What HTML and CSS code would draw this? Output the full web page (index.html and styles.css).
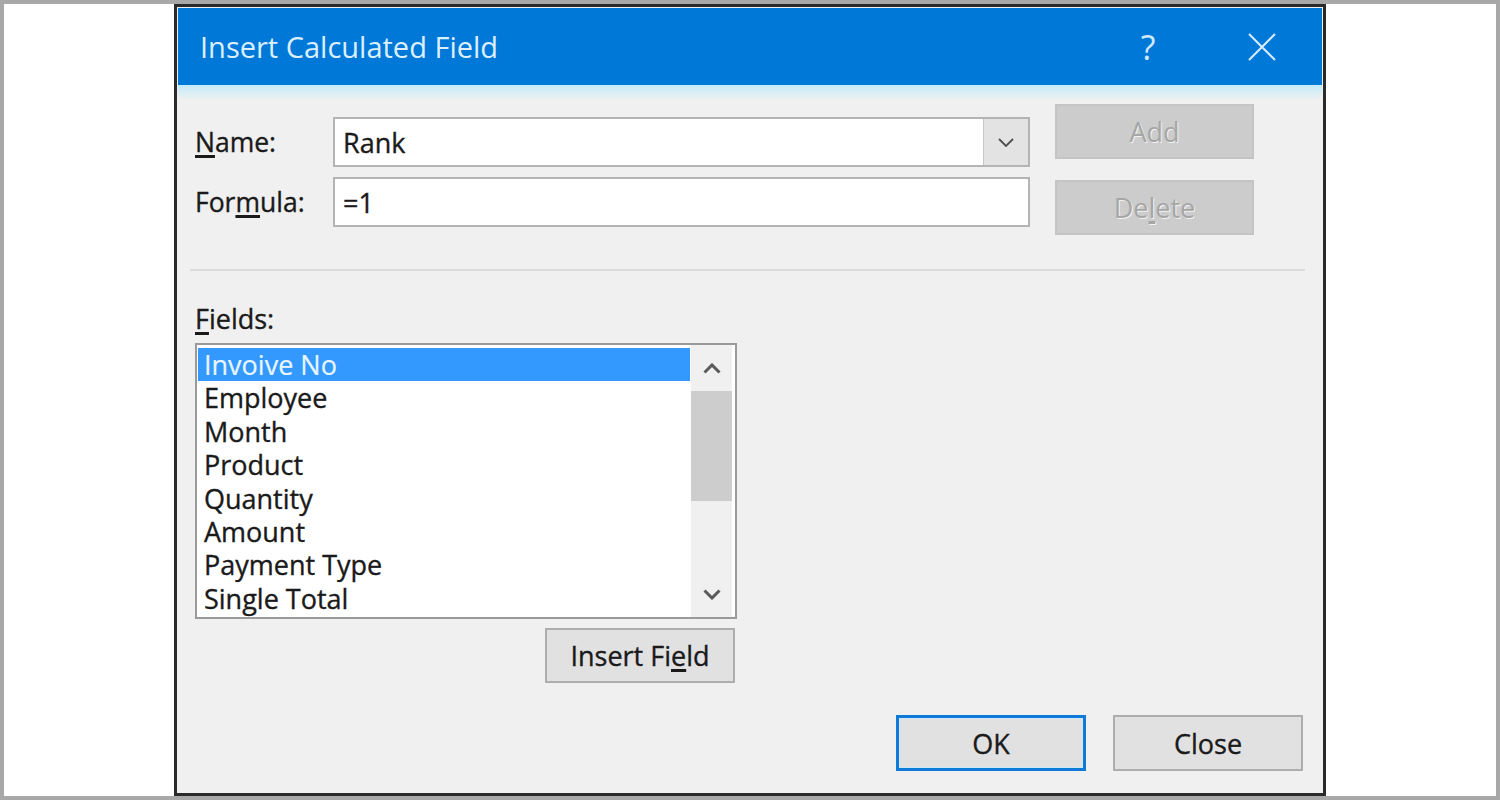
FILE: index.html
```html
<!DOCTYPE html>
<html>
<head>
<meta charset="utf-8">
<title>Insert Calculated Field</title>
<link rel="stylesheet" href="styles.css">
</head>
<body>
<div class="frame">
  <div class="dialog">
    <div class="titlebar">
      <div class="title">Insert Calculated Field</div>
      <div class="tb-btn help">?</div>
      <div class="tb-btn close">
        <svg width="28" height="28" viewBox="0 0 28 28"><path d="M1 1 L27 27 M27 1 L1 27" stroke="#d6ecff" stroke-width="2" fill="none"/></svg>
      </div>
    </div>
    <div class="body">
      <div class="top">
        <div class="form">
          <label class="lbl"><u>N</u>ame:</label>
          <div class="combo">
            <span class="val">Rank</span>
            <span class="drop"><svg width="16" height="9" viewBox="0 0 16 9"><polyline points="1,1 8,8 15,1" stroke="#505050" stroke-width="1.8" fill="none"/></svg></span>
          </div>
          <label class="lbl">For<u>m</u>ula:</label>
          <div class="input"><span class="val">=1</span></div>
        </div>
        <div class="side">
          <button class="btn disabled">Add</button>
          <button class="btn disabled">De<u>l</u>ete</button>
        </div>
      </div>
      <div class="sep"></div>
      <div class="fields-lbl"><u>F</u>ields:</div>
      <div class="listbox">
        <ul class="items">
          <li class="sel">Invoive No</li>
          <li>Employee</li>
          <li>Month</li>
          <li>Product</li>
          <li>Quantity</li>
          <li>Amount</li>
          <li>Payment Type</li>
          <li>Single Total</li>
        </ul>
        <div class="scroll">
          <div class="sb-btn"><svg width="18" height="11" viewBox="0 0 18 11"><polyline points="1.5,9.5 9,2 16.5,9.5" stroke="#5a5a5a" stroke-width="3" fill="none"/></svg></div>
          <div class="thumb"></div>
          <div class="sb-space"></div>
          <div class="sb-btn"><svg width="18" height="11" viewBox="0 0 18 11"><polyline points="1.5,1.5 9,9 16.5,1.5" stroke="#5a5a5a" stroke-width="3" fill="none"/></svg></div>
        </div>
      </div>
      <div class="insert-row">
        <button class="btn">Insert Fi<u>e</u>ld</button>
      </div>
      <div class="footer">
        <button class="btn default">OK</button>
        <button class="btn">Close</button>
      </div>
    </div>
  </div>
</div>
</body>
</html>
```
FILE: styles.css
```css
html, body {
  margin: 0;
  padding: 0;
}
body {
  background: #a8a8a8;
  font-family: "Open Sans", "Noto Sans", sans-serif;
  color: #1a1a1a;
  overflow: hidden;
}
.frame {
  margin: 4px;
  height: 792px;
  background: #ffffff;
  display: flex;
  justify-content: center;
}
.dialog {
  width: 1152px;
  height: 792px;
  box-sizing: border-box;
  border: 3px solid #2a2a2a;
  padding: 1px;
  background: #f0f0f0;
  display: flex;
  flex-direction: column;
}
.titlebar {
  height: 77px;
  flex: none;
  background: #0078d7;
  display: flex;
  align-items: center;
  padding: 0 37px 0 22px;
}
.title {
  flex: 1;
  color: #dcefff;
  font-size: 29px;
  white-space: nowrap;
}
.tb-btn {
  width: 46px;
  height: 46px;
  display: flex;
  align-items: center;
  justify-content: center;
}
.help {
  color: #cfe9ff;
  font-size: 34px;
  font-weight: 400;
  margin-right: 68px;
}
.body {
  flex: 1;
  background: linear-gradient(to bottom, #c4ebfb 0px, #f0f0f0 15px);
  padding: 0 17px;
  display: flex;
  flex-direction: column;
  -webkit-text-stroke: 0.35px currentColor;
}
.top {
  display: flex;
  align-items: flex-start;
  height: 151px;
  flex: none;
}
.form {
  margin-top: 32px;
  display: grid;
  grid-template-columns: 138px 697px;
  grid-auto-rows: 50px;
  row-gap: 10px;
  align-items: center;
}
.lbl {
  font-size: 26.5px;
  color: #1a1a1a;
}
u {
  text-decoration-thickness: 2.5px;
  text-underline-offset: 3px;
}
.combo, .input {
  height: 50px;
  box-sizing: border-box;
  border: 2px solid #b4b4b4;
  background: #ffffff;
  display: flex;
  align-items: center;
}
.val {
  padding-left: 8px;
  font-size: 27px;
  flex: 1;
}
.drop {
  width: 44px;
  align-self: stretch;
  background: #e3e3e3;
  border-left: 1px solid #c8c8c8;
  display: flex;
  align-items: center;
  justify-content: center;
}
.side {
  margin-left: 25px;
  margin-top: 19px;
  display: flex;
  flex-direction: column;
  gap: 21px;
}
.btn {
  box-sizing: border-box;
  font-family: inherit;
  font-size: 27px;
  color: #1a1a1a;
  background: #e1e1e1;
  border: 2px solid #adadad;
  padding: 0;
  margin: 0;
  display: flex;
  align-items: center;
  justify-content: center;
  line-height: 1;
  -webkit-text-stroke: 0.35px currentColor;
}
.side .btn {
  width: 199px;
  height: 55px;
}
.btn.disabled {
  background: #cccccc;
  border-color: #c4c4c4;
  color: #a6a6a6;
  text-shadow: 1px 1px 0 #f2f2f2;
  -webkit-text-stroke: 0;
}
.sep {
  margin: 33px 0 0 -5px;
  height: 2px;
  flex: none;
  background: #dcdcdc;
}
.fields-lbl {
  margin-top: 32px;
  height: 32px;
  line-height: 32px;
  font-size: 27px;
}
.listbox {
  margin-top: 8px;
  width: 542px;
  height: 276px;
  flex: none;
  box-sizing: border-box;
  border: 2px solid #9a9a9a;
  background: #ffffff;
  display: flex;
  padding: 0 3px 0 1px;
  gap: 1px;
}
.items {
  list-style: none;
  margin: 0;
  padding: 3px 0 0 0;
  flex: 1;
}
.items li {
  height: 33.4px;
  line-height: 33.4px;
  padding-left: 6px;
  font-size: 27px;
  color: #1a1a1a;
  white-space: nowrap;
}
.items li.sel {
  background: #3399ff;
  color: #e8f6ff;
  -webkit-text-stroke: 0.2px currentColor;
}
.scroll {
  width: 41px;
  background: #f0f0f0;
  display: flex;
  flex-direction: column;
}
.sb-btn {
  height: 46px;
  display: flex;
  align-items: center;
  justify-content: center;
}
.thumb {
  height: 110px;
  background: #cdcdcd;
}
.sb-space {
  flex: 1;
}
.insert-row {
  width: 542px;
  display: flex;
  justify-content: flex-end;
  margin-top: 9px;
}
.insert-row .btn {
  width: 190px;
  height: 55px;
  margin-right: 2px;
}
.footer {
  margin-top: 32px;
  margin-right: 2px;
  display: flex;
  justify-content: flex-end;
  gap: 27px;
}
.footer .btn {
  width: 190px;
  height: 56px;
}
.btn.default {
  border: 3px solid #0f7ad8;
  box-shadow: inset 0 0 0 1px #cfe9fb;
}
```
